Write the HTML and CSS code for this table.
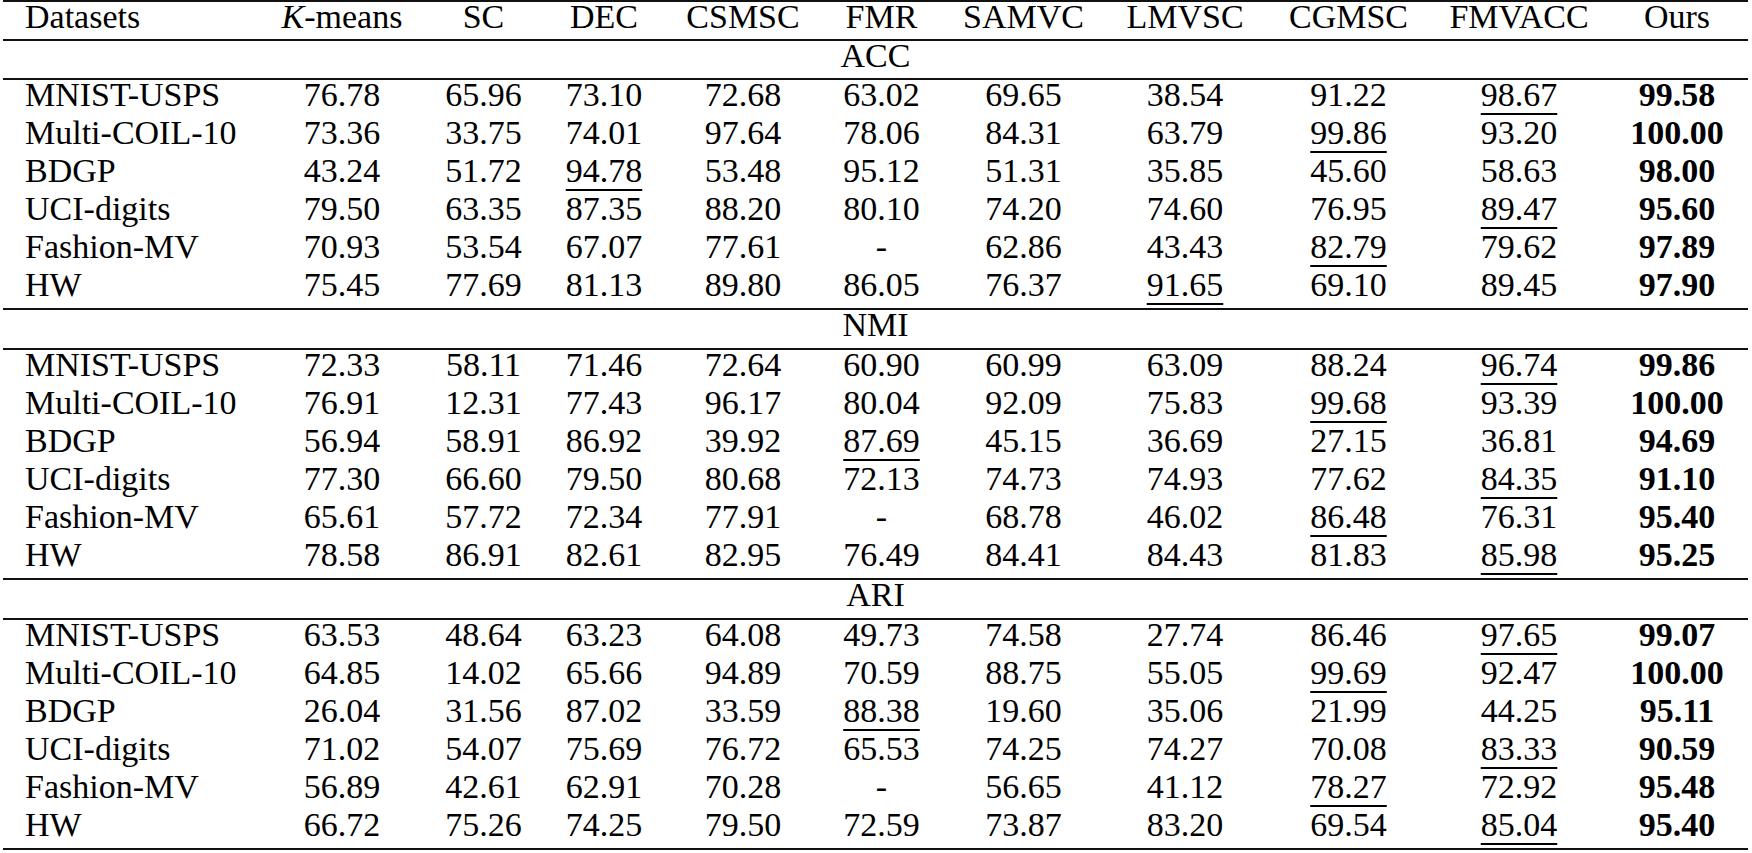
FILE: index.html
```html
<!DOCTYPE html>
<html lang="en">
<head>
  <meta charset="UTF-8" />
  <title>Clustering results</title>
  <link rel="stylesheet" href="styles.css">
</head>
<body>

<table class="results">
  <colgroup>
    <col class="c-name">
    <col class="c-km">
    <col class="c-sc">
    <col class="c-dec">
    <col class="c-csmsc">
    <col class="c-fmr">
    <col class="c-samvc">
    <col class="c-lmvsc">
    <col class="c-cgmsc">
    <col class="c-fmvacc">
    <col class="c-ours">
  </colgroup>
  <thead>
    <tr>
      <th class="name">Datasets</th>
      <th><i>K</i>-means</th>
      <th>SC</th>
      <th>DEC</th>
      <th>CSMSC</th>
      <th>FMR</th>
      <th>SAMVC</th>
      <th>LMVSC</th>
      <th>CGMSC</th>
      <th>FMVACC</th>
      <th>Ours</th>
    </tr>
  </thead>

  <!-- ACC -->
  <tbody>
    <tr class="metric"><td colspan="11">ACC</td></tr>
    <tr>
      <td class="name">MNIST-USPS</td>
      <td>76.78</td><td>65.96</td><td>73.10</td><td>72.68</td><td>63.02</td>
      <td>69.65</td><td>38.54</td><td>91.22</td><td><u>98.67</u></td><td><b>99.58</b></td>
    </tr>
    <tr>
      <td class="name">Multi-COIL-10</td>
      <td>73.36</td><td>33.75</td><td>74.01</td><td>97.64</td><td>78.06</td>
      <td>84.31</td><td>63.79</td><td><u>99.86</u></td><td>93.20</td><td><b>100.00</b></td>
    </tr>
    <tr>
      <td class="name">BDGP</td>
      <td>43.24</td><td>51.72</td><td><u>94.78</u></td><td>53.48</td><td>95.12</td>
      <td>51.31</td><td>35.85</td><td>45.60</td><td>58.63</td><td><b>98.00</b></td>
    </tr>
    <tr>
      <td class="name">UCI-digits</td>
      <td>79.50</td><td>63.35</td><td>87.35</td><td>88.20</td><td>80.10</td>
      <td>74.20</td><td>74.60</td><td>76.95</td><td><u>89.47</u></td><td><b>95.60</b></td>
    </tr>
    <tr>
      <td class="name">Fashion-MV</td>
      <td>70.93</td><td>53.54</td><td>67.07</td><td>77.61</td><td>-</td>
      <td>62.86</td><td>43.43</td><td><u>82.79</u></td><td>79.62</td><td><b>97.89</b></td>
    </tr>
    <tr class="last">
      <td class="name">HW</td>
      <td>75.45</td><td>77.69</td><td>81.13</td><td>89.80</td><td>86.05</td>
      <td>76.37</td><td><u>91.65</u></td><td>69.10</td><td>89.45</td><td><b>97.90</b></td>
    </tr>
  </tbody>

  <!-- NMI -->
  <tbody>
    <tr class="metric"><td colspan="11">NMI</td></tr>
    <tr>
      <td class="name">MNIST-USPS</td>
      <td>72.33</td><td>58.11</td><td>71.46</td><td>72.64</td><td>60.90</td>
      <td>60.99</td><td>63.09</td><td>88.24</td><td><u>96.74</u></td><td><b>99.86</b></td>
    </tr>
    <tr>
      <td class="name">Multi-COIL-10</td>
      <td>76.91</td><td>12.31</td><td>77.43</td><td>96.17</td><td>80.04</td>
      <td>92.09</td><td>75.83</td><td><u>99.68</u></td><td>93.39</td><td><b>100.00</b></td>
    </tr>
    <tr>
      <td class="name">BDGP</td>
      <td>56.94</td><td>58.91</td><td>86.92</td><td>39.92</td><td><u>87.69</u></td>
      <td>45.15</td><td>36.69</td><td>27.15</td><td>36.81</td><td><b>94.69</b></td>
    </tr>
    <tr>
      <td class="name">UCI-digits</td>
      <td>77.30</td><td>66.60</td><td>79.50</td><td>80.68</td><td>72.13</td>
      <td>74.73</td><td>74.93</td><td>77.62</td><td><u>84.35</u></td><td><b>91.10</b></td>
    </tr>
    <tr>
      <td class="name">Fashion-MV</td>
      <td>65.61</td><td>57.72</td><td>72.34</td><td>77.91</td><td>-</td>
      <td>68.78</td><td>46.02</td><td><u>86.48</u></td><td>76.31</td><td><b>95.40</b></td>
    </tr>
    <tr class="last">
      <td class="name">HW</td>
      <td>78.58</td><td>86.91</td><td>82.61</td><td>82.95</td><td>76.49</td>
      <td>84.41</td><td>84.43</td><td>81.83</td><td><u>85.98</u></td><td><b>95.25</b></td>
    </tr>
  </tbody>

  <!-- ARI -->
  <tbody>
    <tr class="metric"><td colspan="11">ARI</td></tr>
    <tr>
      <td class="name">MNIST-USPS</td>
      <td>63.53</td><td>48.64</td><td>63.23</td><td>64.08</td><td>49.73</td>
      <td>74.58</td><td>27.74</td><td>86.46</td><td><u>97.65</u></td><td><b>99.07</b></td>
    </tr>
    <tr>
      <td class="name">Multi-COIL-10</td>
      <td>64.85</td><td>14.02</td><td>65.66</td><td>94.89</td><td>70.59</td>
      <td>88.75</td><td>55.05</td><td><u>99.69</u></td><td>92.47</td><td><b>100.00</b></td>
    </tr>
    <tr>
      <td class="name">BDGP</td>
      <td>26.04</td><td>31.56</td><td>87.02</td><td>33.59</td><td><u>88.38</u></td>
      <td>19.60</td><td>35.06</td><td>21.99</td><td>44.25</td><td><b>95.11</b></td>
    </tr>
    <tr>
      <td class="name">UCI-digits</td>
      <td>71.02</td><td>54.07</td><td>75.69</td><td>76.72</td><td>65.53</td>
      <td>74.25</td><td>74.27</td><td>70.08</td><td><u>83.33</u></td><td><b>90.59</b></td>
    </tr>
    <tr>
      <td class="name">Fashion-MV</td>
      <td>56.89</td><td>42.61</td><td>62.91</td><td>70.28</td><td>-</td>
      <td>56.65</td><td>41.12</td><td><u>78.27</u></td><td>72.92</td><td><b>95.48</b></td>
    </tr>
    <tr class="last">
      <td class="name">HW</td>
      <td>66.72</td><td>75.26</td><td>74.25</td><td>79.50</td><td>72.59</td>
      <td>73.87</td><td>83.20</td><td>69.54</td><td><u>85.04</u></td><td><b>95.40</b></td>
    </tr>
  </tbody>
</table>

</body>
</html>
```

FILE: styles.css
```css
body {
  margin: 0;
  background: #fff;
  color: #000;
  font-family: 'Liberation Serif', 'Times New Roman', serif;
}
.results {
  margin-left: 3px;
  width: 1745px;
  table-layout: fixed;
  border-collapse: separate;
  border-spacing: 0;
  font-size: 34px;
  line-height: 29px;
}
.c-name   { width: 257px; }
.c-km     { width: 164px; }
.c-sc     { width: 119px; }
.c-dec    { width: 122px; }
.c-csmsc  { width: 156px; }
.c-fmr    { width: 121px; }
.c-samvc  { width: 163px; }
.c-lmvsc  { width: 160px; }
.c-cgmsc  { width: 167px; }
.c-fmvacc { width: 174px; }
.c-ours   { width: 142px; }

.results th,
.results td {
  padding: 0 0 9px;
  text-align: center;
  font-weight: normal;
  white-space: nowrap;
}
.results th {
  padding-bottom: 8px;
  border-top: 2px solid #111;
  border-bottom: 2px solid #111;
}
.results .name {
  text-align: left;
  padding-left: 22px;
}
.metric td {
  border-bottom: 2px solid #111;
}
thead + tbody .metric td {
  padding-bottom: 8px;
}
.last td {
  border-bottom: 2px solid #111;
}
.results u {
  text-decoration-thickness: 2px;
  text-underline-offset: 7px;
}
.results b {
  font-weight: bold;
}
```
